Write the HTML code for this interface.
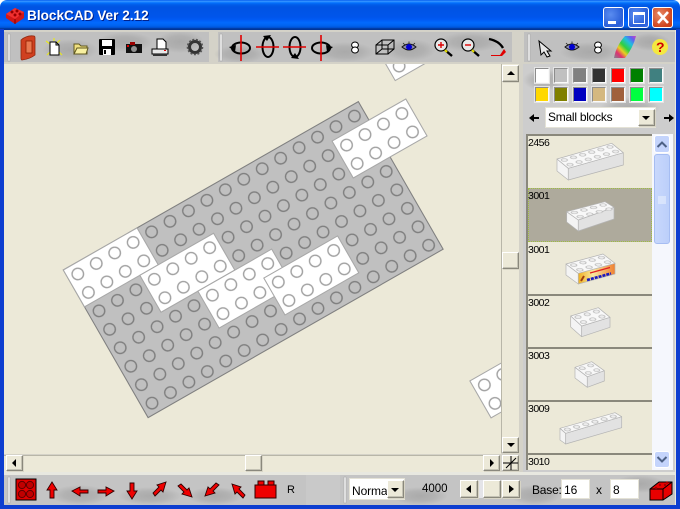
<!DOCTYPE html>
<html><head><meta charset="utf-8"><title>BlockCAD</title>
<style>
html,body{margin:0;padding:0;width:680px;height:509px;overflow:hidden;background:#fff}
*{box-sizing:border-box}
#w{position:absolute;left:0;top:0;width:680px;height:509px;overflow:hidden;font-family:"Liberation Sans",sans-serif;color:#000;border-radius:7px 7px 0 0}
.a{position:absolute}
.t{position:absolute;white-space:nowrap;line-height:1}
.btn{position:absolute;background:#ece9d8;border:1px solid;border-color:#fff #8a887c #8a887c #fff;box-shadow:inset -1px -1px #c4c2b4,1px 1px 0 #d8d5c6}
.ff{position:absolute;background:#fff;border:1px solid #e4e2d6}
.sw{position:absolute;width:14px;height:15px;border:1px solid;border-color:#8c8c8c #fafafa #fafafa #8c8c8c;outline:1px solid #e4e4e4}
.xb{position:absolute;border-radius:3px;border:1px solid #fff}
svg{position:absolute;left:0;top:0}
</style></head><body>
<div id="w">
<div class="a" style="left:0;top:0;width:680px;height:30px;background:linear-gradient(#0058ee 0,#3593ff 4%,#288eff 6%,#127dff 8%,#036ffc 10%,#0262ee 14%,#0057e5 20%,#0054e3 24%,#0055eb 56%,#005bf5 66%,#026afe 76%,#0062ef 86%,#0052d6 92%,#0040ab 94%,#003092 100%)"></div>
<div class="a" style="left:0;top:29px;width:4px;height:480px;background:#0d3ed0"></div>
<div class="a" style="left:676px;top:29px;width:4px;height:480px;background:#0d3ed0"></div>
<div class="a" style="left:0;top:505px;width:680px;height:4px;background:#0d3ed0"></div>
<div class="a" style="left:4px;top:30px;width:672px;height:475px;background:#d4d2c8"></div>

<div class="t" style="left:28px;top:10px;font-size:13.6px;font-weight:bold;color:#000a60;opacity:.7">BlockCAD Ver 2.12</div>
<div class="t" style="left:27px;top:9px;font-size:13.6px;font-weight:bold;color:#fff">BlockCAD Ver 2.12</div>

<div class="xb" style="left:603px;top:7px;width:21px;height:21px;background:radial-gradient(circle at 35% 35%,#5a8cf0,#2a5fd8 70%,#3c6ee8)"><div class="a" style="left:4px;top:13px;width:8px;height:3px;background:#fff"></div></div>
<div class="xb" style="left:628px;top:7px;width:21px;height:21px;background:radial-gradient(circle at 35% 35%,#5a8cf0,#2a5fd8 70%,#3c6ee8)"><div class="a" style="left:4px;top:4px;width:12px;height:12px;border:1px solid #fff;border-top-width:3px"></div></div>
<div class="xb" style="left:652px;top:7px;width:21px;height:21px;background:radial-gradient(circle at 35% 35%,#e88a68,#d0451e 70%,#c83c14)"></div>

<!-- toolbars -->
<div class="a" style="left:4px;top:32px;width:205px;height:30px;background:#c0c0c0"></div>
<div class="a" style="left:218px;top:32px;width:294px;height:30px;background:#c0c0c0"></div>
<div class="a" style="left:524px;top:32px;width:151px;height:30px;background:#c0c0c0"></div>
<div class="a" style="left:4px;top:475px;width:672px;height:30px;background:#c4c4c4"></div>
<div class="a" style="left:306px;top:475px;width:34px;height:30px;background:#c9c9c9"></div>
<div class="a" style="left:523px;top:64px;width:153px;height:411px;background:#cdcdcd"></div>

<svg width="680" height="509" viewBox="0 0 680 509">
<defs>
<radialGradient id="blot"><stop offset="0" stop-color="#a4a4a4" stop-opacity=".8"/><stop offset=".55" stop-color="#a4a4a4" stop-opacity=".55"/><stop offset="1" stop-color="#a4a4a4" stop-opacity="0"/></radialGradient>
<pattern id="gs" patternUnits="userSpaceOnUse" width="1" height="1"><circle cx=".5" cy=".5" r=".27" fill="none" stroke="#7e7e7e" stroke-width=".065"/></pattern>
<pattern id="ws" patternUnits="userSpaceOnUse" width="1" height="1"><circle cx=".5" cy=".5" r=".27" fill="none" stroke="#a0a0a0" stroke-width=".065"/></pattern>
<pattern id="ss" patternUnits="userSpaceOnUse" width="1" height="1"><circle cx=".5" cy=".5" r=".28" fill="#ececec" stroke="#bcbcbc" stroke-width=".1"/></pattern>
<clipPath id="cv"><rect x="4" y="64" width="497" height="390"/></clipPath>
<clipPath id="tb"><rect x="4" y="32" width="672" height="30"/><rect x="4" y="475" width="672" height="30"/><rect x="523" y="64" width="153" height="70"/></clipPath>
</defs>
<g clip-path="url(#tb)"><g fill="url(#blot)">
<ellipse cx="70" cy="50" rx="28" ry="11"/><ellipse cx="125" cy="42" rx="28" ry="10"/><ellipse cx="180" cy="42" rx="24" ry="11"/><ellipse cx="240" cy="54" rx="26" ry="9"/><ellipse cx="345" cy="52" rx="30" ry="10"/><ellipse cx="410" cy="50" rx="26" ry="11"/><ellipse cx="470" cy="42" rx="32" ry="10"/><ellipse cx="590" cy="52" rx="30" ry="10"/><ellipse cx="650" cy="42" rx="20" ry="9"/>
<ellipse cx="80" cy="495" rx="30" ry="10"/><ellipse cx="150" cy="496" rx="32" ry="9"/><ellipse cx="215" cy="496" rx="28" ry="9"/><ellipse cx="420" cy="496" rx="28" ry="9"/><ellipse cx="535" cy="495" rx="26" ry="10"/><ellipse cx="640" cy="484" rx="26" ry="9"/>
<ellipse cx="545" cy="80" rx="22" ry="11"/><ellipse cx="630" cy="108" rx="30" ry="11"/></g></g>

<!-- canvas -->
<rect x="4" y="64" width="497" height="390" fill="#ece9d8"/>
<g clip-path="url(#cv)">
<g transform="matrix(18.44,-10.525,10.6,18.45,63.3,270)">
<rect width="16" height="8" fill="#c0c0c0" stroke="#808080" stroke-width=".05"/>
<rect width="16" height="8" fill="url(#gs)"/>
</g>
<g transform="matrix(18.44,-10.525,10.6,18.45,63.3,270)"><rect x="0" y="0" width="4" height="2" fill="#fff" stroke="#a8a8a8" stroke-width=".05"/><rect x="0" y="0" width="4" height="2" fill="url(#ws)"/></g>
<g transform="matrix(18.44,-10.525,10.6,18.45,63.3,270)"><rect x="3" y="2" width="4" height="2" fill="#fff" stroke="#a8a8a8" stroke-width=".05"/><rect x="3" y="2" width="4" height="2" fill="url(#ws)"/></g>
<g transform="matrix(18.44,-10.525,10.6,18.45,63.3,270)"><rect x="5" y="4" width="4" height="2" fill="#fff" stroke="#a8a8a8" stroke-width=".05"/><rect x="5" y="4" width="4" height="2" fill="url(#ws)"/></g>
<g transform="matrix(18.44,-10.525,10.6,18.45,63.3,270)"><rect x="8" y="5" width="4" height="2" fill="#fff" stroke="#a8a8a8" stroke-width=".05"/><rect x="8" y="5" width="4" height="2" fill="url(#ws)"/></g>
<g transform="matrix(18.44,-10.525,10.6,18.45,63.3,270)"><rect x="14" y="1" width="4" height="2" fill="#fff" stroke="#a8a8a8" stroke-width=".05"/><rect x="14" y="1" width="4" height="2" fill="url(#ws)"/></g>
<g transform="matrix(18.44,-10.525,10.6,18.45,63.3,270)"><rect x="18" y="-2" width="4" height="2" fill="#fff" stroke="#a8a8a8" stroke-width=".05"/><rect x="18" y="-2" width="4" height="2" fill="url(#ws)"/></g>
<g transform="matrix(18.44,-10.525,10.6,18.45,63.3,270)"><rect x="14" y="14" width="4" height="2" fill="#fff" stroke="#a8a8a8" stroke-width=".05"/><rect x="14" y="14" width="4" height="2" fill="url(#ws)"/></g>
</g>

<!-- title icon -->
<g><polygon points="6,14 15,8 24,12 24,18 15,24 6,18" fill="#d01818"/><polygon points="6,14 15,19 24,12 15,8" fill="#f03030"/><path d="M15,19V24" stroke="#800000"/><circle cx="12" cy="12" r="1.5" fill="#900"/><circle cx="17" cy="11" r="1.5" fill="#900"/><circle cx="15" cy="15" r="1.5" fill="#900"/><circle cx="20" cy="14" r="1.5" fill="#900"/></g>
<path d="M658,12l10,11M668,12l-10,11" stroke="#fff" stroke-width="2.6"/>

<!-- grip handles -->
<g fill="#f4f4f4" stroke="#a0a0a0" stroke-width=".5"><rect x="8" y="34" width="2" height="27"/><rect x="220" y="34" width="2" height="27"/><rect x="528" y="34" width="2" height="27"/><rect x="8" y="477" width="2" height="26"/><rect x="344" y="477" width="2" height="26"/></g>

<!-- top toolbar -->
<path d="M21,40q6-5 13-4q1,0 1,2v17q-5,4-13,5q-1,0-1-2z" fill="#d04020" stroke="#902810" stroke-width=".8"/><rect x="26" y="41" width="6" height="12" fill="#e87850" stroke="#902000" stroke-width=".8"/>
<g stroke="#e8e820" stroke-width="1.2"><path d="M46,41l4,3M60,40l-3,3M47,55l3-3M62,55l-3-3M54,38v3"/></g><path d="M50,42h6l3,3v10h-9z" fill="#fff" stroke="#000"/><path d="M56,42v3h3" fill="none" stroke="#000"/>
<path d="M74,44h5l2,2h6v8h-13z" fill="#f0e080" stroke="#605820"/><path d="M74,54l3-6h11l-2,6z" fill="#f8f0a0" stroke="#605820"/>
<rect x="99" y="39" width="16" height="16" rx="1" fill="#000"/><rect x="102" y="40" width="10" height="6" fill="#fff"/><rect x="103" y="49" width="8" height="6" fill="#fff"/><rect x="104" y="50" width="2" height="4" fill="#000"/>
<rect x="126" y="44" width="16" height="9" fill="#111"/><rect x="130" y="42" width="5" height="3" fill="#900"/><circle cx="134" cy="49" r="3" fill="#909090"/><rect x="127" y="45" width="2" height="2" fill="#d00"/>
<path d="M157,39h6l3,3v7h-9z" fill="#fff" stroke="#000"/><rect x="152" y="49" width="16" height="5" fill="#e8e8e8" stroke="#000"/><rect x="153" y="54" width="14" height="2" fill="#333"/><rect x="164" y="50" width="2" height="1" fill="#d00"/>
<circle cx="195" cy="47" r="5.5" fill="none" stroke="#333" stroke-width="3"/><circle cx="195" cy="47" r="7.5" fill="none" stroke="#555" stroke-width="1.6" stroke-dasharray="2 1.6"/>

<g fill="none" stroke="#000" stroke-width="2">
<ellipse cx="241" cy="48" rx="9" ry="5.5"/><ellipse cx="268" cy="47" rx="5.5" ry="10"/><ellipse cx="295" cy="47" rx="5.5" ry="10"/><ellipse cx="321" cy="48" rx="9" ry="5.5"/></g>
<g fill="#000"><path d="M229,47l7,-2l-1,7z"/><path d="M263,36l8,-1l-4,6z"/><path d="M291,58l8,1l-4-6z"/><path d="M333,47l-7,-2l1,7z"/></g>
<g stroke="#e00000" stroke-width="1.6"><path d="M241,35v26M256,47h23M283,47h23M321,35v26"/></g>

<g fill="#fff" stroke="#000" stroke-width="1"><ellipse cx="355" cy="45" rx="3.4" ry="3"/><ellipse cx="355" cy="50" rx="3.4" ry="3"/><ellipse cx="598" cy="45" rx="3.4" ry="3"/><ellipse cx="598" cy="50" rx="3.4" ry="3"/></g>
<g fill="none" stroke="#000" stroke-width="1"><path d="M376,45h12v9h-12zM376,45l6-5h12v9l-6,5M388,45l6-5M376,54l6-5h12M382,40v9"/></g>
<g id="eye"><path d="M402,47q7-6 14,0q-7,6-14,0z" fill="#8888a8" stroke="#111"/><circle cx="409" cy="47" r="3" fill="#0000d0"/><path d="M403,43l2,2M409,41.500v2M415,43l-2,2" stroke="#222" stroke-width=".8"/></g>
<use href="#eye" x="163"/>
<circle cx="441" cy="45" r="6" fill="#e8e8e8" stroke="#000" stroke-width="1.2"/><path d="M438,45h6M441,42v6" stroke="#d00" stroke-width="1.4"/><path d="M445,50l7,6" stroke="#000" stroke-width="2.4"/><path d="M445,50l2,2" stroke="#e8e000" stroke-width="2"/>
<circle cx="468" cy="45" r="6" fill="#e8e8e8" stroke="#000" stroke-width="1.2"/><path d="M465,45h6" stroke="#d00" stroke-width="1.4"/><path d="M472,50l7,6" stroke="#000" stroke-width="2.4"/><path d="M472,50l2,2" stroke="#e8e000" stroke-width="2"/>
<path d="M489,39q10,2 14,9" fill="none" stroke="#000" stroke-width="2.4"/><path d="M491,55h9l4-6l2,3l-4,4h-11z" fill="#e00000"/>

<path d="M539,41l12,10l-4,0l3,5l-3,1l-3-5l-3,3z" fill="#e8e8e8" stroke="#000"/>
<defs><linearGradient id="rb" x1="0" y1="1" x2="1" y2="0"><stop offset="0" stop-color="#808090"/><stop offset=".2" stop-color="#e03070"/><stop offset=".35" stop-color="#e8d020"/><stop offset=".5" stop-color="#30d040"/><stop offset=".7" stop-color="#20c0e0"/><stop offset=".85" stop-color="#6060f0"/><stop offset="1" stop-color="#d040c0"/></linearGradient></defs>
<path d="M614,58q2-12 11-22h11q-3,12-11,22z" fill="url(#rb)"/>
<circle cx="660" cy="47" r="8" fill="#f4e840"/><text x="656" y="52" font-family="Liberation Sans" font-size="14" font-weight="bold" fill="#d00000">?</text>

<!-- bottom toolbar -->
<rect x="16" y="479" width="20" height="21" fill="#e00000" stroke="#000"/><g fill="#c00000" stroke="#600000"><circle cx="22" cy="485" r="3.6"/><circle cx="30" cy="485" r="3.6"/><circle cx="22" cy="494" r="3.6"/><circle cx="30" cy="494" r="3.6"/></g>
<g fill="#f00000" stroke="#300000" stroke-width=".9">
<path d="M52,482l5,8h-3v8h-4v-8h-3z"/>
<path d="M72,491l8-4v3h8v3h-8v3z"/>
<path d="M114,491l-8-4v3h-8v3h8v3z"/>
<path d="M132,499l5-8h-3v-8h-4v8h-3z"/>
<path d="M166,482l-9,3 2,2 -6,6 2,3 6-6 2,2z"/>
<path d="M192,497l-3-9 -2,2 -6-6 -3,2 6,6 -2,2z"/>
<path d="M205,496l3-9 2,2 6-6 3,2 -6,6 2,2z"/>
<path d="M232,484l9,3 -2,2 6,6 -2,3 -6-6 -2,2z"/>
</g>
<g fill="#f00000" stroke="#300000"><rect x="255" y="485" width="21" height="13"/><rect x="258" y="481" width="6" height="4"/><rect x="268" y="481" width="6" height="4"/></g>
<path d="M650,489l9,-7h13v12l-9,6h-13z" fill="#e80000" stroke="#000"/><path d="M650,489h13l9,-7M663,489v11" fill="none" stroke="#000"/><g fill="#a00000"><circle cx="660" cy="485" r="1.200"/><circle cx="665" cy="485" r="1.200"/><circle cx="656" cy="488" r="1.200"/><circle cx="667" cy="482.500" r="1.200"/></g>

<!-- side arrows -->
<path d="M529,118l5-4v3h5v2h-5v3z" fill="#000"/><path d="M674,118l-5-4v3h-5v2h5v3z" fill="#000"/>
</svg>

<!-- scrollbars -->
<div class="a" style="left:501px;top:64px;width:18px;height:389px;background:#ece9d8;border-left:1px solid #b8b6a8"></div>
<div class="a" style="left:4px;top:455px;width:496px;height:17px;background:#ece9d8;border-top:1px solid #b8b6a8"></div>
<div class="a" style="left:4px;top:472px;width:672px;height:3px;background:#e8e8e0"></div>
<div class="btn" style="left:502px;top:65px;width:17px;height:17px"></div>
<div class="btn" style="left:502px;top:252px;width:17px;height:17px"></div>
<div class="btn" style="left:502px;top:437px;width:17px;height:16px"></div>
<div class="btn" style="left:502px;top:455px;width:17px;height:16px"></div>
<div class="btn" style="left:6px;top:455px;width:17px;height:16px"></div>
<div class="btn" style="left:245px;top:455px;width:17px;height:16px"></div>
<div class="btn" style="left:483px;top:455px;width:17px;height:16px"></div>

<!-- palette -->
<div class="sw" style="left:535px;top:68px;background:#fff"></div>
<div class="sw" style="left:554px;top:68px;background:#c0c0c0"></div>
<div class="sw" style="left:573px;top:68px;background:#808080"></div>
<div class="sw" style="left:592px;top:68px;background:#333"></div>
<div class="sw" style="left:611px;top:68px;background:#ff0000"></div>
<div class="sw" style="left:630px;top:68px;background:#008000"></div>
<div class="sw" style="left:649px;top:68px;background:#408080"></div>
<div class="sw" style="left:535px;top:87px;background:#ffd800"></div>
<div class="sw" style="left:554px;top:87px;background:#808000"></div>
<div class="sw" style="left:573px;top:87px;background:#0000c0"></div>
<div class="sw" style="left:592px;top:87px;background:#d4b880"></div>
<div class="sw" style="left:611px;top:87px;background:#a0603c"></div>
<div class="sw" style="left:630px;top:87px;background:#00ff40"></div>
<div class="sw" style="left:649px;top:87px;background:#00ffff"></div>

<!-- combo -->
<div class="ff" style="left:545px;top:107px;width:111px;height:21px"></div>
<div class="t" style="left:548px;top:111px;font-size:12px;letter-spacing:-.25px">Small blocks</div>
<div class="btn" style="left:638px;top:109px;width:17px;height:17px"></div>
<div class="a" style="left:642px;top:116px;border:4px solid transparent;border-top:4px solid #000;border-bottom:0"></div>

<!-- list -->
<div class="a" style="left:526px;top:134px;width:128px;height:336px;background:#ece9d8;border:2px solid #8a887c;border-bottom:0;overflow:hidden">
<div class="a" style="left:0;top:52px;width:124px;height:54px;background:#aeaa9c;outline:1px dotted #a0c040;outline-offset:-1px"></div>
<div class="a" style="left:0;top:158px;width:124px;height:2px;background:#8a887c"></div>
<div class="a" style="left:0;top:211px;width:124px;height:2px;background:#8a887c"></div>
<div class="a" style="left:0;top:264px;width:124px;height:2px;background:#8a887c"></div>
<div class="a" style="left:0;top:317px;width:124px;height:2px;background:#8a887c"></div>
</div>
<div class="t" style="left:528px;top:138px;font-size:10.500px;letter-spacing:-.5px">2456</div>
<div class="t" style="left:528px;top:191px;font-size:10.500px;letter-spacing:-.5px">3001</div>
<div class="t" style="left:528px;top:245px;font-size:10.500px;letter-spacing:-.5px">3001</div>
<div class="t" style="left:528px;top:298px;font-size:10.500px;letter-spacing:-.5px">3002</div>
<div class="t" style="left:528px;top:351px;font-size:10.500px;letter-spacing:-.5px">3003</div>
<div class="t" style="left:528px;top:404px;font-size:10.500px;letter-spacing:-.5px">3009</div>
<div class="t" style="left:528px;top:457px;font-size:10.500px;letter-spacing:-.5px">3010</div>

<svg width="680" height="509" viewBox="0 0 680 509">
<defs><linearGradient id="art" x1="0" y1="0" x2="1" y2="0"><stop offset="0" stop-color="#f0b020"/><stop offset=".4" stop-color="#f8e8a0"/><stop offset="1" stop-color="#f08030"/></linearGradient></defs>
<g stroke="#b4b4b4" stroke-width=".7" stroke-linejoin="round">
<polygon points="557,159 568.300,168.300 568.300,180 557,171" fill="#f4f4f4"/><polygon points="568.300,168.300 623.300,152.700 623.300,165 568.300,180" fill="#e2e2e2"/><polygon points="557,159 611.700,143.300 623.300,152.700 568.300,168.300" fill="#f8f8f8"/>
<polygon points="566.700,211.700 578.300,220 578.300,231 566.700,222" fill="#f4f4f4"/><polygon points="578.300,220 614,207.300 614,219 578.300,231" fill="#e2e2e2"/><polygon points="566.700,211.700 605,201.700 614,207.300 578.300,220" fill="#f8f8f8"/>
<polygon points="566,264 578.300,273.300 578.300,284 566,275" fill="#f4f4f4"/><polygon points="578.300,273.300 615,263.300 615,274 578.300,284" fill="url(#art)"/><polygon points="566,264 603,254 615,263.300 578.300,273.300" fill="#f8f8f8"/>
<polygon points="570.700,316 581.700,326 581.700,336.700 570.700,327" fill="#f4f4f4"/><polygon points="581.700,326 610,317.300 610,327.300 581.700,336.700" fill="#e2e2e2"/><polygon points="570.700,316 598.300,307.700 610,317.300 581.700,326" fill="#f8f8f8"/>
<polygon points="575,367.300 587.300,376.700 587.300,387.300 575,378" fill="#f4f4f4"/><polygon points="587.300,376.700 604.300,370.700 604.300,381 587.300,387.300" fill="#e2e2e2"/><polygon points="575,367.300 591.700,361.700 604.300,370.700 587.300,376.700" fill="#f8f8f8"/>
<polygon points="560,428.300 565.700,433.300 565.700,444 560,440" fill="#f4f4f4"/><polygon points="565.700,433.300 621.700,416.700 621.700,427.700 565.700,444" fill="#e2e2e2"/><polygon points="560,428.300 615,412.700 621.700,416.700 565.700,433.300" fill="#f8f8f8"/>
</g>
<path d="M587,280l24-6.500" stroke="#1818c0" stroke-width="2.600" stroke-dasharray="3 1"/><path d="M590,273l20-5.500" stroke="#e02020" stroke-width="1.200"/><path d="M581,281l3-5" stroke="#a04010" stroke-width="2"/>
<g transform="matrix(9.12,-2.62,5.65,4.65,557,159)"><rect width="6" height="2" fill="url(#ss)"/></g>
<g transform="matrix(9.58,-2.5,5.8,4.15,566.7,211.7)"><rect width="4" height="2" fill="url(#ss)"/></g>
<g transform="matrix(9.25,-2.5,6.15,4.65,566,264)"><rect width="4" height="2" fill="url(#ss)"/></g>
<g transform="matrix(9.2,-2.77,5.5,5,570.7,316)"><rect width="3" height="2" fill="url(#ss)"/></g>
<g transform="matrix(8.35,-2.8,6.15,4.7,575,367.3)"><rect width="2" height="2" fill="url(#ss)"/></g>
<g transform="matrix(9.17,-2.6,5.7,5,560,428.3)"><rect width="6" height="1" fill="url(#ss)"/></g>
</svg>

<!-- list scrollbar -->
<div class="a" style="left:652px;top:134px;width:21px;height:336px;background:#f5f7fd"></div>
<div class="a" style="left:654px;top:135px;width:16px;height:18px;background:#c4d4fc;border:1px solid #fff;border-radius:3px"></div>
<div class="a" style="left:654px;top:154px;width:16px;height:90px;background:linear-gradient(90deg,#c8d8fc,#bccffa);border:1px solid #a6bdf2;border-radius:3px"></div>
<div class="a" style="left:654px;top:451px;width:16px;height:17px;background:#c4d4fc;border:1px solid #fff;border-radius:3px"></div>
<div class="a" style="left:675px;top:30px;width:1px;height:475px;background:#e8e8e0"></div>

<!-- bottom controls -->
<div class="t" style="left:287px;top:485px;font-size:11px">R</div>
<div class="ff" style="left:349px;top:478px;width:56px;height:22px;overflow:hidden"><div class="t" style="left:2px;top:6px;font-size:12px;letter-spacing:-.1px">Norma</div></div>
<div class="btn" style="left:387px;top:480px;width:17px;height:18px"></div>
<div class="a" style="left:391px;top:488px;border:4px solid transparent;border-top:4px solid #000;border-bottom:0"></div>
<div class="t" style="left:422px;top:484px;font-size:11.500px">4000</div>
<div class="a" style="left:460px;top:480px;width:60px;height:18px;background:#e4e4e8"></div>
<div class="btn" style="left:460px;top:480px;width:18px;height:18px"></div>
<div class="btn" style="left:483px;top:480px;width:18px;height:18px"></div>
<div class="btn" style="left:502px;top:480px;width:18px;height:18px"></div>
<div class="a" style="left:466px;top:485px;border:4px solid transparent;border-right:5px solid #000;border-left:0"></div>
<div class="a" style="left:509px;top:485px;border:4px solid transparent;border-left:5px solid #000;border-right:0"></div>
<div class="t" style="left:532px;top:484px;font-size:12px;letter-spacing:-.2px">Base:</div>
<div class="ff" style="left:561px;top:479px;width:29px;height:20px"></div>
<div class="t" style="left:564px;top:484px;font-size:12px">16</div>
<div class="t" style="left:596px;top:484px;font-size:12px">x</div>
<div class="ff" style="left:610px;top:479px;width:29px;height:20px"></div>
<div class="t" style="left:613px;top:484px;font-size:12px">8</div>

<!-- scroll glyphs on top of buttons -->
<svg width="680" height="509" viewBox="0 0 680 509">
<g fill="#000"><path d="M511,71l4,4h-8z"/><path d="M507,443h8l-4,4z"/><path d="M16,459v8l-4-4z"/><path d="M490,459v8l4-4z"/></g>
<path d="M503,463h15M511,456v14M506,468l10-10" stroke="#000" stroke-width="1" fill="none"/>
<path d="M657.500,147l4.500-4.500l4.500,4.500M657.500,457l4.500,4.500l4.500-4.500" fill="none" stroke="#4d6185" stroke-width="2"/>
<path d="M658,197h8M658,199h8M658,201h8M658,203h8" stroke="#eef4fe" stroke-width="1"/>
</svg>
</div>
</body></html>
